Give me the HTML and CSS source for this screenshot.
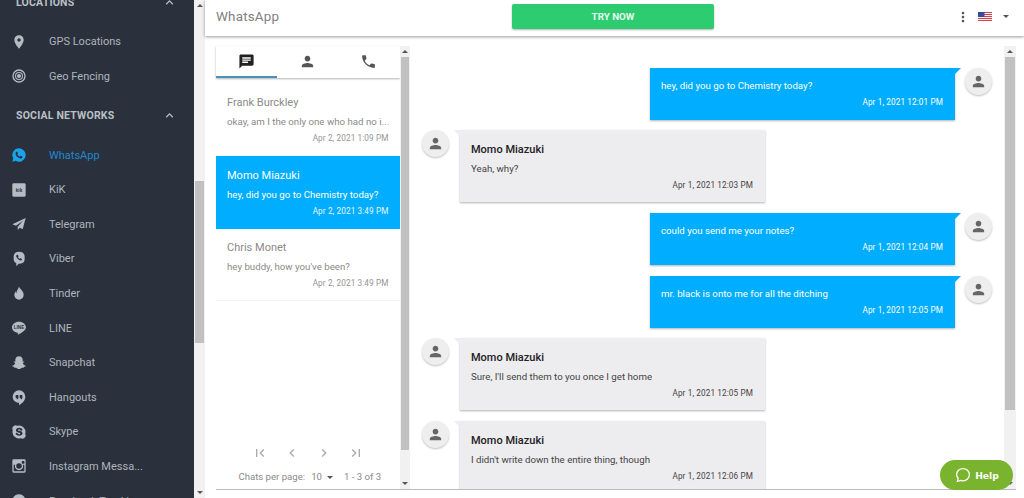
FILE: index.html
```html
<!DOCTYPE html>
<html lang="en">
<head>
    <meta charset="UTF-8">
    <title>WhatsApp</title>
    <link rel="stylesheet" href="styles.css">
</head>
<body>

    <svg class="defs" width="0" height="0">
        <symbol id="i-person" viewBox="0 0 24 24"><path d="M12 12c2.21 0 4-1.79 4-4s-1.79-4-4-4-4 1.79-4 4 1.79 4 4 4zm0 2c-2.67 0-8 1.34-8 4v2h16v-2c0-2.66-5.33-4-8-4z"/></symbol>
    </svg>

    <nav class="sidebar">
        <div class="nav-list">
            <div class="nav-head"><span>LOCATIONS</span><svg class="nav-caret" viewBox="0 0 24 24"><path d="M7.41 15.41L12 10.83l4.59 4.58L18 14l-6-6-6 6z"/></svg></div>
            <a class="nav-item"><svg viewBox="0 0 24 24"><path d="M12 2C8.13 2 5 5.13 5 9c0 5.25 7 13 7 13s7-7.75 7-13c0-3.87-3.13-7-7-7zm0 9.5c-1.38 0-2.5-1.12-2.5-2.5s1.12-2.5 2.5-2.5 2.5 1.12 2.5 2.5-1.12 2.5-2.5 2.5z"/></svg><span>GPS Locations</span></a>
            <a class="nav-item"><svg viewBox="0 0 24 24"><path fill-rule="evenodd" d="M12 2a10 10 0 1 0 0 20 10 10 0 0 0 0-20zm0 2a8 8 0 1 1 0 16 8 8 0 0 1 0-16zm0 2a6 6 0 1 0 0 12 6 6 0 0 0 0-12zm0 1.6a4.4 4.4 0 1 1 0 8.800 4.400 4.400 0 0 1 0-8.800zm0 1.400a3 3 0 1 0 0 6 3 3 0 0 0 0-6z"/></svg><span>Geo Fencing</span></a>
            <div class="nav-head"><span>SOCIAL NETWORKS</span><svg class="nav-caret" viewBox="0 0 24 24"><path d="M7.41 15.41L12 10.83l4.59 4.58L18 14l-6-6-6 6z"/></svg></div>
            <a class="nav-item active"><svg viewBox="0 0 24 24"><path fill-rule="evenodd" d="M12 2a10 10 0 0 0-8.600 15.100L2 22l5.100-1.300A10 10 0 1 0 12 2zM8.700 7c.3 0 .6 0 .8.500l.9 2.100c.1.300 0 .6-.2.800l-.7.800c.8 1.500 2 2.600 3.500 3.300l.9-1c.2-.2.500-.3.800-.2l2.100 1c.3.100.5.400.4.800-.2 1.300-1.300 2.200-2.600 2.100-3.900-.3-7.600-4-7.800-7.700C6.700 8.200 7.500 7 8.700 7z"/></svg><span>WhatsApp</span></a>
            <a class="nav-item"><svg viewBox="0 0 24 24"><rect x="2" y="2" width="20" height="20" rx="2"/><text class="icon-label" x="12" y="15">kik</text></svg><span>KiK</span></a>
            <a class="nav-item"><svg viewBox="0 0 24 24"><path d="M22 3L2 12.500l5.500 2.200L18 7l-8 9v5l3.200-3.500 4.300 2.500z"/></svg><span>Telegram</span></a>
            <a class="nav-item"><svg viewBox="0 0 24 24"><path fill-rule="evenodd" d="M12 1C7 1 4 3.500 4 8.500v4c0 3 1.500 5 4 6V23l3.500-4H13c5 0 7.500-2.500 7.500-6.500v-4C20.500 3.500 17 1 12 1zM9.500 5.500c.4 0 .6.200.8.500l.9 1.500c.2.400.1.700-.2 1l-.6.500c.5 1.300 1.400 2.300 2.800 2.800l.5-.7c.3-.3.600-.4 1-.2l1.500 1c.4.300.5.600.3 1-.5 1-1.500 1.700-2.500 1.400-3.200-1-5.500-3.600-6.300-6.400-.3-1 .8-2.400 1.800-2.400z"/></svg><span>Viber</span></a>
            <a class="nav-item"><svg viewBox="0 0 24 24"><path d="M11.500 2c1 4-4.500 6-2.500 10.500C8 12 7.500 11 7.500 9.500 5.500 11.500 5 13.500 5 15c0 4 3 7 7 7s7-3 7-7c0-6-5-8-7.500-13z"/></svg><span>Tinder</span></a>
            <a class="nav-item"><svg viewBox="0 0 24 24"><path d="M12 2.500C6 2.500 1.500 6.300 1.500 11c0 4.200 3.500 7.600 8.300 8.300.7.200.6.900.5 1.700-.1.700.4 1.100 1.100.700 4-2 11-6 11-10.700 0-4.700-4.500-8.500-10.400-8.500z"/><text class="icon-label" x="12" y="13.500">LINE</text></svg><span>LINE</span></a>
            <a class="nav-item"><svg viewBox="0 0 24 24"><path d="M12 2c3.500 0 5.500 2.500 5.500 5.500v2.700l1.800-.4c.7 0 .9.800.3 1.200l-1.900 1c.6 2 2.200 3.500 4.300 4.200.4.300.2.800-.3 1l-2.200.6-.5 1.500-2.500-.2c-1.200.2-2.200 2-4.500 2s-3.300-1.800-4.500-2l-2.500.2-.5-1.500-2.200-.6c-.5-.2-.7-.7-.3-1 2.100-.7 3.700-2.200 4.300-4.200l-1.900-1c-.6-.4-.4-1.200.3-1.200l1.800.4V7.500C6.500 4.500 8.500 2 12 2z"/></svg><span>Snapchat</span></a>
            <a class="nav-item"><svg viewBox="0 0 24 24"><path fill-rule="evenodd" d="M12 2a9.500 9.500 0 0 0-9.500 9.500c0 5.200 4.200 9 9.500 9V24c5-2.500 9.500-7 9.500-12.500A9.500 9.500 0 0 0 12 2zM7 9h4v4c0 1.500-1 2.500-2.500 2.500v-2H7zm6 0h4v4c0 1.500-1 2.500-2.500 2.500v-2H13z"/></svg><span>Hangouts</span></a>
            <a class="nav-item"><svg viewBox="0 0 24 24"><path fill-rule="evenodd" d="M7 2a5 5 0 0 0-4.300 7.500A9.500 9.500 0 0 0 14.500 21.300 5 5 0 0 0 21.300 14.500 9.500 9.500 0 0 0 9.500 2.700 5 5 0 0 0 7 2zm5.200 3.500c2.700 0 4.800 1 4.800 3 0 1-.7 1.600-1.500 1.600-1.800 0-1.300-2.200-3.400-2.200-1 0-1.600.4-1.600 1 0 1.800 6.800.8 6.800 5 0 2.400-2.200 3.800-5 3.800-3 0-5.300-1.400-5.300-3.300 0-.9.700-1.400 1.500-1.400 1.700 0 1.300 2.400 3.700 2.400 1.100 0 1.800-.5 1.800-1.200 0-2-6.600-1-6.600-5 0-2.200 2-3.700 4.800-3.700z"/></svg><span>Skype</span></a>
            <a class="nav-item"><svg viewBox="0 0 24 24"><path fill-rule="evenodd" d="M4 2h16a2 2 0 0 1 2 2v16a2 2 0 0 1-2 2H4a2 2 0 0 1-2-2V4a2 2 0 0 1 2-2zm13 2.500a.8.800 0 0 0-.8.800v2.400c0 .4.400.8.800.8h2.400c.4 0 .8-.4.800-.8V5.300a.8.800 0 0 0-.8-.8zM4 10v9.500c0 .3.200.5.500.500h15c.3 0 .5-.2.500-.5V10h-2.200A6.200 6.200 0 1 1 6.200 10zm8-2.200a4.200 4.200 0 1 0 0 8.400 4.200 4.200 0 0 0 0-8.400z"/></svg><span>Instagram Messa...</span></a>
            <a class="nav-item"><svg viewBox="0 0 24 24"><path d="M12 2C6.500 2 2 6.200 2 11.500c0 2.900 1.400 5.400 3.500 7.100V22l3.200-1.800c1 .3 2.100.4 3.300.4 5.500 0 10-4.200 10-9.100S17.500 2 12 2z"/></svg><span>Facebook Tracking</span></a>
        </div>
    </nav>

    <div class="scrollbar side-scroll">
        <i class="arrow up"></i>
        <div class="thumb"></div>
        <i class="arrow down"></i>
    </div>

    <main class="main">
        <header class="topbar">
            <h1 class="page-title">WhatsApp</h1>
            <button class="try-btn">TRY NOW</button>
            <div class="top-actions">
                <svg class="more-icon" viewBox="0 0 24 24"><path d="M12 8c1.100 0 2-.9 2-2s-.9-2-2-2-2 .9-2 2 .9 2 2 2zm0 2c-1.100 0-2 .9-2 2s.9 2 2 2 2-.9 2-2-.9-2-2-2zm0 6c-1.100 0-2 .9-2 2s.9 2 2 2 2-.9 2-2-.9-2-2-2z"/></svg>
                <svg class="flag" viewBox="0 0 14 9">
                    <rect width="14" height="9" fill="#f4f0f0"/>
                    <rect width="14" height="1" fill="#d8404f"/>
                    <rect y="2" width="14" height="1" fill="#d8404f"/>
                    <rect y="4" width="14" height="1" fill="#d8404f"/>
                    <rect y="6" width="14" height="1" fill="#d8404f"/>
                    <rect y="8" width="14" height="1" fill="#d8404f"/>
                    <rect width="6.500" height="5" fill="#3a4a9a"/>
                </svg>
                <i class="caret"></i>
            </div>
        </header>

        <div class="content">
            <section class="chats">
                <div class="tabs">
                    <div class="tab active"><svg viewBox="0 0 24 24"><path d="M20 2H4c-1.100 0-1.990.9-1.990 2L2 22l4-4h14c1.100 0 2-.9 2-2V4c0-1.100-.9-2-2-2zM6 9h12v2H6V9zm8 5H6v-2h8v2zm4-6H6V6h12v2z"/></svg></div>
                    <div class="tab"><svg viewBox="0 0 24 24"><use href="#i-person"/></svg></div>
                    <div class="tab"><svg viewBox="0 0 24 24"><path d="M6.620 10.790c1.440 2.830 3.760 5.140 6.590 6.590l2.200-2.200c.27-.27.67-.36 1.020-.24 1.120.37 2.330.57 3.570.57.550 0 1 .45 1 1V20c0 .55-.45 1-1 1-9.390 0-17-7.610-17-17 0-.55.45-1 1-1h3.500c.55 0 1 .45 1 1 0 1.250.2 2.450.57 3.570.11.350.03.740-.25 1.020l-2.200 2.200z"/></svg></div>
                </div>
                <ul class="chat-list">
                    <li class="chat">
                        <div class="chat-name">Frank Burckley</div>
                        <div class="chat-text">okay, am I the only one who had no i...</div>
                        <div class="chat-time">Apr 2, 2021 1:09 PM</div>
                    </li>
                    <li class="chat selected">
                        <div class="chat-name">Momo Miazuki</div>
                        <div class="chat-text">hey, did you go to Chemistry today?</div>
                        <div class="chat-time">Apr 2, 2021 3:49 PM</div>
                    </li>
                    <li class="chat">
                        <div class="chat-name">Chris Monet</div>
                        <div class="chat-text">hey buddy, how you've been?</div>
                        <div class="chat-time">Apr 2, 2021 3:49 PM</div>
                    </li>
                </ul>
                <div class="pager">
                    <div class="pager-btns">
                        <svg viewBox="0 0 24 24"><path d="M18.410 16.590L13.820 12l4.590-4.590L17 6l-6 6 6 6zM6 6h2v12H6z"/></svg>
                        <svg viewBox="0 0 24 24"><path d="M15.410 7.410L14 6l-6 6 6 6 1.410-1.410L10.830 12z"/></svg>
                        <svg viewBox="0 0 24 24"><path d="M10 6L8.590 7.410 13.170 12l-4.580 4.590L10 18l6-6z"/></svg>
                        <svg viewBox="0 0 24 24"><path d="M5.590 7.410L10.180 12l-4.590 4.590L7 18l6-6-6-6zM16 6h2v12h-2z"/></svg>
                    </div>
                    <div class="pager-info">
                        <span>Chats per page:</span>
                        <span class="per-page">10<i class="caret"></i></span>
                        <span>1 - 3 of 3</span>
                    </div>
                </div>
            </section>
            <div class="scrollbar chats-scroll">
                <i class="arrow up"></i>
                <div class="thumb"></div>
                <i class="arrow down"></i>
            </div>

            <section class="messages">
                <div class="msg sent">
                    <div class="bubble">
                        <p class="msg-text">hey, did you go to Chemistry today?</p>
                        <div class="msg-time">Apr 1, 2021 12:01 PM</div>
                    </div>
                    <div class="avatar"><svg viewBox="0 0 24 24"><use href="#i-person"/></svg></div>
                </div>
                <div class="msg received">
                    <div class="avatar"><svg viewBox="0 0 24 24"><use href="#i-person"/></svg></div>
                    <div class="bubble">
                        <div class="msg-name">Momo Miazuki</div>
                        <p class="msg-text">Yeah, why?</p>
                        <div class="msg-time">Apr 1, 2021 12:03 PM</div>
                    </div>
                </div>
                <div class="msg sent">
                    <div class="bubble">
                        <p class="msg-text">could you send me your notes?</p>
                        <div class="msg-time">Apr 1, 2021 12:04 PM</div>
                    </div>
                    <div class="avatar"><svg viewBox="0 0 24 24"><use href="#i-person"/></svg></div>
                </div>
                <div class="msg sent">
                    <div class="bubble">
                        <p class="msg-text">mr. black is onto me for all the ditching</p>
                        <div class="msg-time">Apr 1, 2021 12:05 PM</div>
                    </div>
                    <div class="avatar"><svg viewBox="0 0 24 24"><use href="#i-person"/></svg></div>
                </div>
                <div class="msg received">
                    <div class="avatar"><svg viewBox="0 0 24 24"><use href="#i-person"/></svg></div>
                    <div class="bubble">
                        <div class="msg-name">Momo Miazuki</div>
                        <p class="msg-text">Sure, I'll send them to you once I get home</p>
                        <div class="msg-time">Apr 1, 2021 12:05 PM</div>
                    </div>
                </div>
                <div class="msg received">
                    <div class="avatar"><svg viewBox="0 0 24 24"><use href="#i-person"/></svg></div>
                    <div class="bubble">
                        <div class="msg-name">Momo Miazuki</div>
                        <p class="msg-text">I didn't write down the entire thing, though</p>
                        <div class="msg-time">Apr 1, 2021 12:06 PM</div>
                    </div>
                </div>
            </section>
            <div class="scrollbar msgs-scroll">
                <i class="arrow up"></i>
                <div class="thumb"></div>
                <i class="arrow down"></i>
            </div>
        </div>
    </main>

    <button class="help-btn">
        <svg viewBox="0 0 24 24"><path d="M12 3.500c-4.700 0-8.500 3.300-8.500 7.700 0 2 .8 3.800 2.100 5.100L4.500 20.500l4.700-1.200c.9.300 1.800.4 2.800.4 4.700 0 8.500-3.600 8.500-8.300S16.700 3.500 12 3.500z"/></svg>
        Help
    </button>

</body>
</html>
```

FILE: styles.css
```css
* {
    box-sizing: border-box;
}
html, body {
    height: 100%;
}
body {
    margin: 0;
    display: flex;
    height: 498px;
    overflow: hidden;
    background-color: #fff;
    font-family: Roboto, "Liberation Sans", sans-serif;
    color: #333;
}
.defs {
    display: none;
}

/* sidebar */
.sidebar {
    width: 194px;
    flex: none;
    overflow: hidden;
    background-color: #2a303c;
    color: #aeb6bd;
}
.nav-list {
    margin-top: -20.2px;
}
.nav-head {
    height: 44.4px;
    padding: 0 17px 0 16px;
    display: flex;
    align-items: center;
    justify-content: space-between;
    font-size: 10.5px;
    font-weight: 700;
    letter-spacing: .2px;
    color: #b9c0c6;
}
.nav-caret {
    width: 15px;
    height: 15px;
    fill: #b9c0c6;
}
.nav-item {
    height: 34.6px;
    padding-left: 11px;
    display: flex;
    align-items: center;
    gap: 22px;
    font-size: 11px;
    white-space: nowrap;
}
.nav-item svg {
    width: 16px;
    height: 16px;
    flex: none;
    fill: #b4bcc4;
}
.nav-item.active {
    color: #1e88d2;
}
.nav-item.active svg {
    fill: #1aa3e8;
}
.icon-label {
    font-family: "Liberation Sans", sans-serif;
    font-size: 7px;
    font-weight: 700;
    text-anchor: middle;
    fill: #2a303c;
}

/* scrollbars */
.scrollbar {
    flex: none;
    display: flex;
    flex-direction: column;
    align-items: center;
    padding: 0 1px;
    background-color: #f1f1f1;
}
.scrollbar .thumb {
    width: 100%;
    background-color: #c1c1c1;
}
.arrow {
    display: block;
    width: 0;
    height: 0;
    border-left: 3px solid transparent;
    border-right: 3px solid transparent;
}
.arrow.up {
    margin-top: 4px;
    border-bottom: 3px solid #555;
}
.arrow.down {
    margin-top: auto;
    margin-bottom: 4px;
    border-top: 3px solid #555;
}
.side-scroll {
    width: 11px;
    height: 498px;
}
.side-scroll .thumb {
    height: 162px;
    margin-top: 174px;
}
.chats-scroll {
    width: 10.5px;
}
.chats-scroll .thumb {
    height: 393px;
    margin-top: 4px;
}
.msgs-scroll {
    width: 12px;
}
.msgs-scroll .thumb {
    height: 353px;
    margin-top: 4px;
}

/* top bar */
.main {
    flex: 1;
    min-width: 0;
    display: flex;
    flex-direction: column;
}
.topbar {
    height: 36px;
    flex: none;
    position: relative;
    display: flex;
    align-items: center;
    padding: 0 15px 3px 11px;
    background-color: #fff;
    box-shadow: 0 1px 3px rgba(0,0,0,0.4);
}
.page-title {
    width: 296px;
    flex: none;
    margin: 0;
    font-size: 13.4px;
    font-weight: 400;
    color: #808080;
    letter-spacing: .2px;
}
.try-btn {
    width: 202px;
    height: 25px;
    border: none;
    border-radius: 2px;
    background-color: #2ecc71;
    color: #e8f8ee;
    font-family: inherit;
    font-size: 9.8px;
    font-weight: 700;
    box-shadow: 0 1px 2px rgba(0,0,0,0.3);
}
.top-actions {
    margin-left: auto;
    display: flex;
    align-items: center;
}
.more-icon {
    width: 16px;
    height: 16px;
    fill: #555;
}
.flag {
    width: 14px;
    height: 9px;
    margin-left: 7px;
}
.caret {
    display: inline-block;
    width: 0;
    height: 0;
    border-left: 3px solid transparent;
    border-right: 3px solid transparent;
    border-top: 3px solid #555;
}
.top-actions .caret {
    margin-left: 11px;
}

/* panels */
.content {
    flex: 1;
    min-height: 0;
    display: flex;
    align-items: stretch;
    padding: 10px 8px 8px 11px;
}
.chats {
    width: 183.5px;
    flex: none;
    display: flex;
    flex-direction: column;
    border-bottom: 1px solid #bbb;
}
.chats-scroll, .msgs-scroll, .messages {
    border-bottom: 1px solid #bbb;
}
.tabs {
    height: 32px;
    flex: none;
    display: flex;
    box-shadow: 0 1px 2px rgba(0,0,0,0.3);
}
.tab {
    flex: 1;
    display: flex;
    align-items: center;
    justify-content: center;
    border-bottom: 2px solid transparent;
}
.tab svg {
    width: 17px;
    height: 17px;
    fill: #555;
}
.tab.active {
    border-bottom-color: #4a90b8;
}
.tab.active svg {
    fill: #222;
}
.chat-list {
    list-style: none;
    margin: 5.5px 0 0;
    padding: 0;
}
.chat {
    height: 72.6px;
    padding: 11.5px 11px 0;
    border-bottom: 1px solid #f5f5f5;
    color: #8a8a8a;
}
.chat.selected {
    background-color: #00adff;
    border-bottom: none;
    color: #fff;
}
.chat-name {
    font-size: 11px;
    line-height: 16px;
}
.chat-text {
    margin-top: 3px;
    font-size: 9.7px;
    line-height: 16px;
    white-space: nowrap;
}
.chat-time {
    font-size: 8.2px;
    line-height: 16px;
    text-align: right;
    letter-spacing: .12px;
    opacity: .9;
}
.pager {
    margin-top: auto;
    color: #9e9e9e;
}
.pager-btns {
    display: flex;
    justify-content: center;
    gap: 16px;
    margin-bottom: 2px;
}
.pager-btns svg {
    width: 16px;
    height: 16px;
    fill: #aaa;
}
.pager-info {
    display: flex;
    justify-content: center;
    gap: 6px;
    height: 26px;
    padding: 8px 0 0 4px;
    font-size: 9.6px;
    color: #8a8a8a;
}
.per-page {
    margin-right: 5px;
}
.per-page .caret {
    margin-left: 5px;
    vertical-align: 1px;
}

/* messages */
.messages {
    flex: 1;
    min-width: 0;
    overflow: hidden;
    display: flex;
    flex-direction: column;
    gap: 10.62px;
    padding: 21.7px 12px 0;
}
.msg {
    flex: none;
    display: flex;
    align-items: flex-start;
    gap: 11px;
}
.msg.sent {
    justify-content: flex-end;
    gap: 10px;
}
.bubble {
    position: relative;
    width: 305px;
    padding: 11px 12px 0 11px;
    box-shadow: 0 1px 2px rgba(0,0,0,0.3);
}
.sent .bubble {
    height: 52px;
    background-color: #00adff;
    color: #fff;
}
.received .bubble {
    height: 72px;
    padding-top: 12px;
    background-color: #edecef;
    color: #444;
}
.bubble::after {
    content: "";
    position: absolute;
    top: 0;
    width: 0;
    height: 0;
    border-top: 6px solid;
}
.sent .bubble::after {
    right: -6px;
    border-right: 6px solid transparent;
    border-top-color: #00adff;
}
.received .bubble::after {
    left: -6px;
    border-left: 6px solid transparent;
    border-top-color: #edecef;
}
.msg-name {
    font-size: 11px;
    font-weight: 500;
    line-height: 16px;
    margin-bottom: 4px;
    color: #222;
}
.msg-text {
    margin: 0;
    font-size: 9.7px;
    line-height: 14px;
}
.msg-time {
    margin-top: 2px;
    font-size: 8.2px;
    line-height: 14px;
    text-align: right;
    letter-spacing: .12px;
}
.avatar {
    width: 27px;
    height: 27px;
    flex: none;
    display: flex;
    align-items: center;
    justify-content: center;
    border-radius: 50%;
    background-color: #eee;
    box-shadow: 0 1px 2px rgba(0,0,0,0.25);
}
.avatar svg {
    width: 17px;
    height: 17px;
    fill: #666;
}

/* help */
.help-btn {
    position: absolute;
    left: 940px;
    top: 460px;
    width: 73px;
    height: 30px;
    display: flex;
    align-items: center;
    justify-content: center;
    gap: 3px;
    border: none;
    border-radius: 15px;
    background-color: #7ab32e;
    color: #fff;
    font-family: "DejaVu Sans", sans-serif;
    font-size: 9.2px;
    font-weight: 700;
}
.help-btn svg {
    width: 18px;
    height: 18px;
    fill: none;
    stroke: #fff;
    stroke-width: 1.7;
}
```
